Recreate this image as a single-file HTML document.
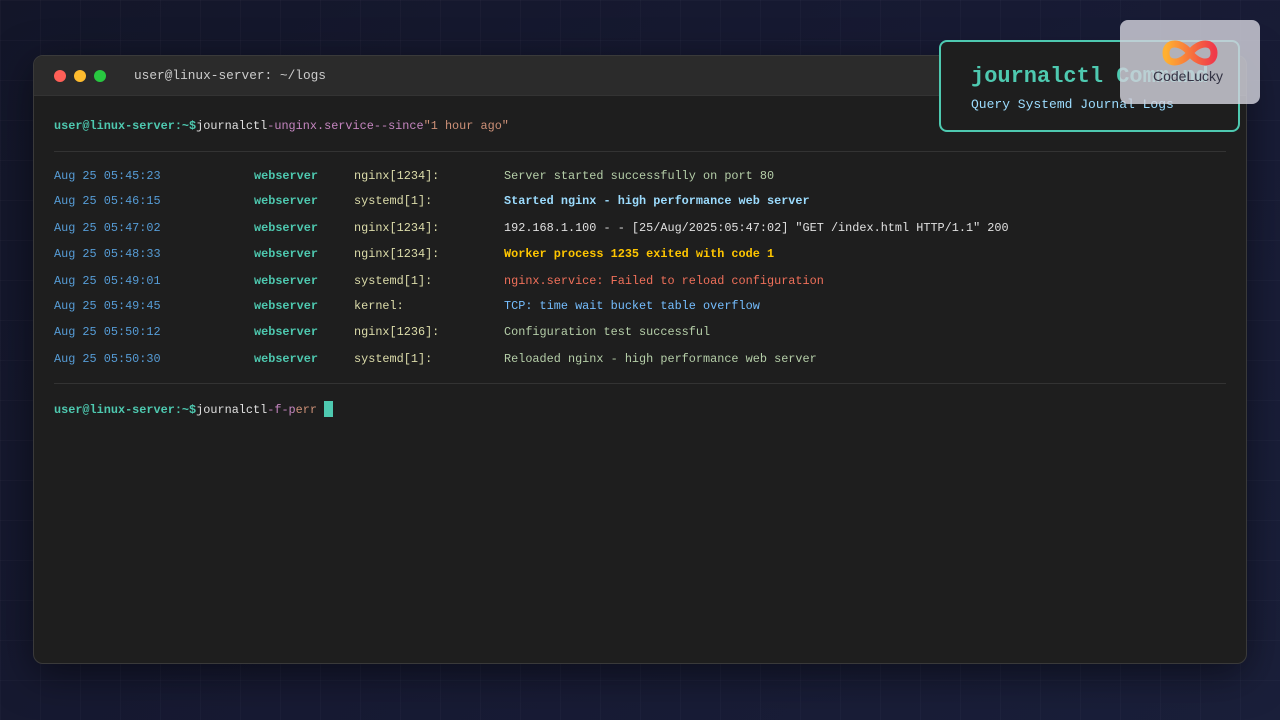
<!DOCTYPE html>
<html><head><meta charset="utf-8"><style>
*{margin:0;padding:0;box-sizing:border-box}
body{width:1280px;height:720px;overflow:hidden;position:relative;font-family:"Liberation Mono",monospace;
background:linear-gradient(135deg,#131629 0%,#171a33 50%,#1a1f3a 100%);}
.grid{position:absolute;inset:0;background-image:linear-gradient(rgba(255,255,255,.025) 1px,transparent 1px),linear-gradient(90deg,rgba(255,255,255,.025) 1px,transparent 1px);background-size:40px 40px}
.term{position:absolute;left:33px;top:55px;width:1214px;height:609px;background:#1e1e1e;border:1px solid #3a3a3a;border-radius:10px;overflow:hidden;box-shadow:0 10px 40px rgba(0,0,0,.5)}
.hdr{height:40px;background:#2b2b2b;border-bottom:1px solid #333;position:relative}
.dot{position:absolute;top:14px;width:12px;height:12px;border-radius:50%}
.title{position:absolute;left:100px;top:12px;font-size:12.8px;color:#ccc}
.ln{position:absolute;font-size:11.85px;white-space:pre;line-height:14px}
.g{color:#4ec9b0;font-weight:bold}.w{color:#e0e0e0}.p{color:#c586c0}.o{color:#ce9178}
.ts{color:#569cd6}.u{color:#dcdcaa}
.sep{position:absolute;left:20px;right:20px;height:1px;background:#333}
.card{position:absolute;left:939px;top:40px;width:301px;height:92px;background:#1e1e1e;border:2px solid #4ec9b0;border-radius:8px}
.card h1{position:absolute;left:30px;top:22px;font-size:22px;color:#4ec9b0;font-weight:bold;white-space:nowrap}
.card p{position:absolute;left:30px;top:55px;font-size:13px;color:#9cdcfe;white-space:nowrap}
.logo{position:absolute;left:1120px;top:20px;width:140px;height:84px;background:rgba(210,210,220,.82);border-radius:8px}
.logo span{position:absolute;left:33px;top:48px;font-family:"Liberation Sans",sans-serif;font-size:14px;color:#334}
</style></head><body>
<div class="grid"></div>
<div class="term">
<div class="hdr">
<div class="dot" style="left:20px;background:#ff5f57"></div>
<div class="dot" style="left:40px;background:#febc2e"></div>
<div class="dot" style="left:60px;background:#28c840"></div>
<div class="title">user@linux-server: ~/logs</div>
</div>
<div class="ln" style="left:20px;top:63px"><span class="g">user@linux-server:~$</span><span class="w">journalctl</span><span class="p">-u</span><span class="p">nginx.service</span><span class="p">--since</span><span class="o">"1 hour ago"</span></div>
<div class="sep" style="top:95px"></div>
<div class="sep" style="top:327px"></div>
<div class="ln ts" style="left:20px;top:113px">Aug 25 05:45:23</div><div class="ln g" style="left:220px;top:113px">webserver</div><div class="ln u" style="left:320px;top:113px">nginx[1234]:</div><div class="ln" style="left:470px;top:113px;color:#b5cea8">Server started successfully on port 80</div>
<div class="ln ts" style="left:20px;top:138px">Aug 25 05:46:15</div><div class="ln g" style="left:220px;top:138px">webserver</div><div class="ln u" style="left:320px;top:138px">systemd[1]:</div><div class="ln" style="left:470px;top:138px;color:#9cdcfe;font-weight:bold">Started nginx - high performance web server</div>
<div class="ln ts" style="left:20px;top:165px">Aug 25 05:47:02</div><div class="ln g" style="left:220px;top:165px">webserver</div><div class="ln u" style="left:320px;top:165px">nginx[1234]:</div><div class="ln" style="left:470px;top:165px;color:#e0e0e0">192.168.1.100 - - [25/Aug/2025:05:47:02] "GET /index.html HTTP/1.1" 200</div>
<div class="ln ts" style="left:20px;top:191px">Aug 25 05:48:33</div><div class="ln g" style="left:220px;top:191px">webserver</div><div class="ln u" style="left:320px;top:191px">nginx[1234]:</div><div class="ln" style="left:470px;top:191px;color:#ffc600;font-weight:bold">Worker process 1235 exited with code 1</div>
<div class="ln ts" style="left:20px;top:218px">Aug 25 05:49:01</div><div class="ln g" style="left:220px;top:218px">webserver</div><div class="ln u" style="left:320px;top:218px">systemd[1]:</div><div class="ln" style="left:470px;top:218px;color:#f0705a">nginx.service: Failed to reload configuration</div>
<div class="ln ts" style="left:20px;top:243px">Aug 25 05:49:45</div><div class="ln g" style="left:220px;top:243px">webserver</div><div class="ln u" style="left:320px;top:243px">kernel:</div><div class="ln" style="left:470px;top:243px;color:#75beff">TCP: time wait bucket table overflow</div>
<div class="ln ts" style="left:20px;top:269px">Aug 25 05:50:12</div><div class="ln g" style="left:220px;top:269px">webserver</div><div class="ln u" style="left:320px;top:269px">nginx[1236]:</div><div class="ln" style="left:470px;top:269px;color:#b5cea8">Configuration test successful</div>
<div class="ln ts" style="left:20px;top:296px">Aug 25 05:50:30</div><div class="ln g" style="left:220px;top:296px">webserver</div><div class="ln u" style="left:320px;top:296px">systemd[1]:</div><div class="ln" style="left:470px;top:296px;color:#b5cea8">Reloaded nginx - high performance web server</div>
<div class="ln" style="left:20px;top:345px"><span class="g">user@linux-server:~$</span><span class="w">journalctl</span><span class="p">-f</span><span class="p">-p</span><span class="o">err</span> <span style="display:inline-block;width:9px;height:16px;background:#4ec9b0;vertical-align:-4px"></span></div>
</div>
<div class="card"><h1>journalctl Command</h1><p>Query Systemd Journal Logs</p></div>
<div class="logo">
<svg width="140" height="60" style="position:absolute;left:0;top:0"><defs><linearGradient id="lg" x1="0" x2="1"><stop offset="0" stop-color="#ffb030"/><stop offset="1" stop-color="#f03a4a"/></linearGradient></defs><path d="M70 33c-9-12-24-12-24 0s15 12 24 0c9-12 24-12 24 0s-15 12-24 0z" fill="none" stroke="url(#lg)" stroke-width="7"/></svg>
<span>CodeLucky</span></div>
</body></html>
